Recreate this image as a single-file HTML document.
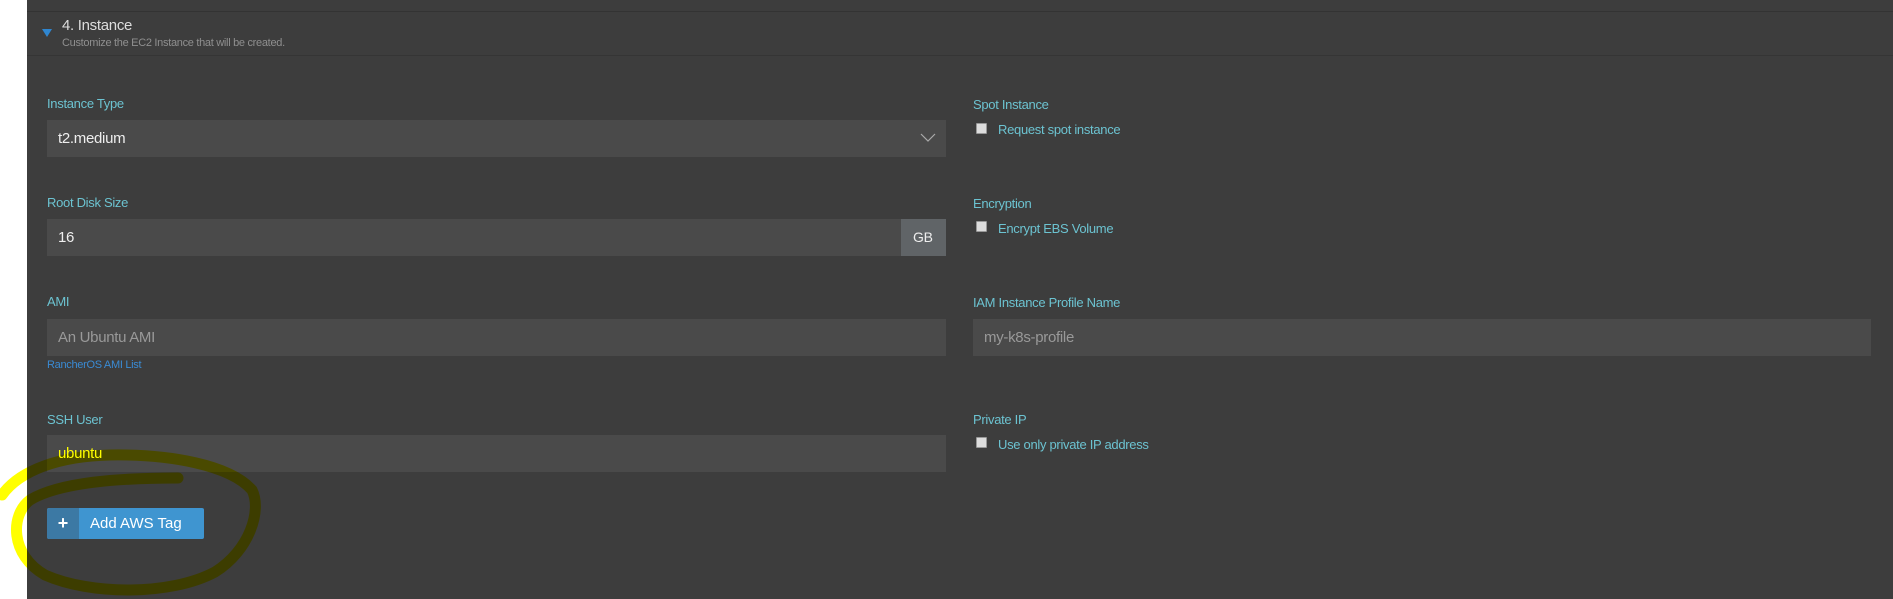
<!DOCTYPE html>
<html><head><meta charset="utf-8"><style>
*{margin:0;padding:0;box-sizing:border-box}
body{width:1893px;height:599px;background:#fff;position:relative;overflow:hidden;font-family:"Liberation Sans",sans-serif}
.panel{position:absolute;left:27px;top:0;width:1866px;height:599px;background:#3d3d3d}
.hdr{position:absolute;left:27px;top:11px;width:1866px;height:45px;border-top:1px solid #333;border-bottom:1px solid #353535}
.a{position:absolute;white-space:nowrap}
.lbl{color:#6cc3d1;font-size:13px;letter-spacing:-0.3px}
.inp{position:absolute;background:#4a4a4a;height:37px;font-size:15px;line-height:37px;padding-left:11px;letter-spacing:-0.3px}
.cb{position:absolute;width:11px;height:11px;background:#ddd;border:1px solid #999;border-radius:1px}
</style></head><body>
<div class="panel"></div>
<div class="hdr"></div>
<div class="a" style="left:42px;top:29px;width:0;height:0;border-left:5px solid transparent;border-right:5px solid transparent;border-top:8px solid #2f86d0"></div>
<div class="a" style="left:62px;top:17px;color:#ddd;font-size:15px;letter-spacing:-0.3px">4. Instance</div>
<div class="a" style="left:62px;top:37px;color:#8f8f8f;font-size:11px;letter-spacing:-0.3px">Customize the EC2 Instance that will be created.</div>

<div class="a lbl" style="left:47px;top:96px">Instance Type</div>
<div class="inp" style="left:47px;top:120px;width:899px;color:#eee">t2.medium</div>
<svg class="a" style="left:920px;top:133px" width="16" height="10"><path d="M1 1 L8 8 L15 1" stroke="#aaa" fill="none" stroke-width="1.2"/></svg>

<div class="a lbl" style="left:47px;top:195px">Root Disk Size</div>
<div class="inp" style="left:47px;top:219px;width:854px;color:#eee">16</div>
<div class="inp" style="left:901px;top:219px;width:45px;background:#606467;color:#eee;padding-left:12px;font-size:14px">GB</div>

<div class="a lbl" style="left:47px;top:294px">AMI</div>
<div class="inp" style="left:47px;top:319px;width:899px;color:#999">An Ubuntu AMI</div>
<div class="a" style="left:47px;top:359px;color:#3a8bd4;font-size:11px;letter-spacing:-0.3px">RancherOS AMI List</div>

<div class="a lbl" style="left:47px;top:412px">SSH User</div>
<div class="inp" style="left:47px;top:435px;width:899px;color:#ffff00">ubuntu</div>

<div class="a" style="left:47px;top:508px;width:157px;height:31px;background:#3f95d0;border-radius:2px"></div>
<div class="a" style="left:47px;top:508px;width:32px;height:31px;background:#3c79a4;border-radius:2px 0 0 2px;color:#fff;font-size:18px;font-weight:bold;text-align:center;line-height:31px">+</div>
<div class="a" style="left:90px;top:515px;color:#fff;font-size:15px">Add AWS Tag</div>

<div class="a lbl" style="left:973px;top:97px">Spot Instance</div>
<div class="cb" style="left:976px;top:123px"></div>
<div class="a lbl" style="left:998px;top:122px">Request spot instance</div>
<div class="a lbl" style="left:973px;top:196px">Encryption</div>
<div class="cb" style="left:976px;top:221px"></div>
<div class="a lbl" style="left:998px;top:221px">Encrypt EBS Volume</div>
<div class="a lbl" style="left:973px;top:295px">IAM Instance Profile Name</div>
<div class="inp" style="left:973px;top:319px;width:898px;color:#999">my-k8s-profile</div>
<div class="a lbl" style="left:973px;top:412px">Private IP</div>
<div class="cb" style="left:976px;top:437px"></div>
<div class="a lbl" style="left:998px;top:437px">Use only private IP address</div>

<svg class="a" style="left:0;top:0;mix-blend-mode:multiply" width="1893" height="599">
<path d="M2 495 C20 470 60 456 110 455 C170 454 230 465 252 490 C262 510 250 550 215 572 C170 596 90 595 45 575 C10 555 10 515 30 500 C60 482 120 478 178 478" stroke="#ffff00" stroke-width="11" fill="none" stroke-linecap="round"/>
</svg>
</body></html>
